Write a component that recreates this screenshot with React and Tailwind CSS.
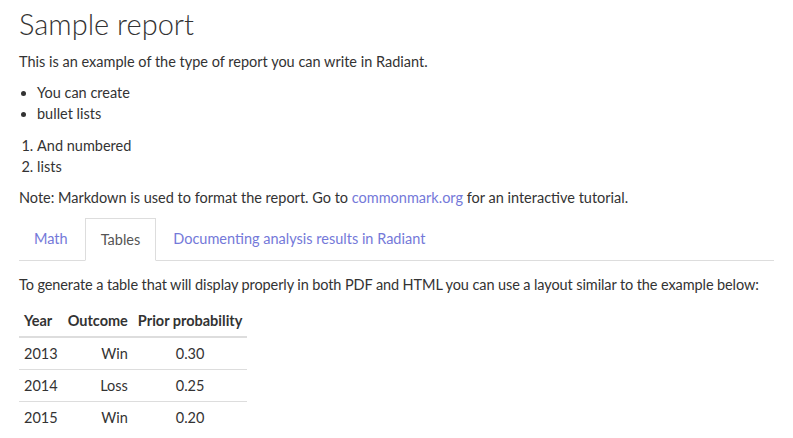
export default function App() {
  const rows = [
    ['2013', 'Win', '0.30'],
    ['2014', 'Loss', '0.25'],
    ['2015', 'Win', '0.20'],
  ];
  return (
    <div className="min-h-screen bg-white px-[19px] text-[14.5px] leading-[21px] text-[#333]" style={{ fontFamily: 'Lato, "Noto Sans", sans-serif' }}>
      <h1 className="pt-[6px] text-[29px] font-light leading-[36px] text-[#333]">Sample report</h1>
      <p className="mt-[9px]">This is an example of the type of report you can write in Radiant.</p>
      <ul className="mt-[10px] list-disc pl-[18px]">
        <li>You can create</li>
        <li>bullet lists</li>
      </ul>
      <ol className="mt-[11px] list-decimal pl-[18px]">
        <li>And numbered</li>
        <li>lists</li>
      </ol>
      <p className="mt-[10px]">
        Note: Markdown is used to format the report. Go to{' '}
        <a className="text-[#7479d9]">commonmark.org</a> for an interactive tutorial.
      </p>
      <div className="mt-[10px] flex border-b border-[#ddd]">
        <div className="px-[15px] py-[10px] text-[#7479d9]">Math</div>
        <div className="-mb-px ml-[2px] border border-b-white border-[#ddd] bg-white px-[15px] py-[10px] text-[#555]">Tables</div>
        <div className="ml-[2px] px-[15px] py-[10px] text-[#7479d9]">Documenting analysis results in Radiant</div>
      </div>
      <p className="mt-[13px] whitespace-nowrap tracking-[-0.1px]">To generate a table that will display properly in both PDF and HTML you can use a layout similar to the example below:</p>
      <table className="mt-[10px] border-collapse">
        <thead>
          <tr className="border-b-2 border-[#ddd]">
            <th className="px-[5px] py-[5px] text-left font-bold">Year</th>
            <th className="px-[5px] py-[5px] text-right font-bold">Outcome</th>
            <th className="px-[5px] py-[5px] text-center font-bold">Prior probability</th>
          </tr>
        </thead>
        <tbody>
          {rows.map((r, i) => (
            <tr key={r[0]} className={i < rows.length - 1 ? 'border-b border-[#ddd]' : ''}>
              <td className="px-[5px] py-[5px] text-left">{r[0]}</td>
              <td className="px-[5px] py-[5px] text-right">{r[1]}</td>
              <td className="px-[5px] py-[5px] text-center">{r[2]}</td>
            </tr>
          ))}
        </tbody>
      </table>
    </div>
  );
}
